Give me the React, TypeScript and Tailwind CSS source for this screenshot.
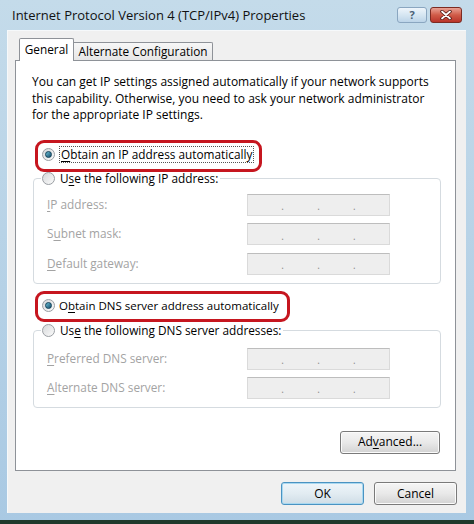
import React from 'react';

const labelRows = [
  { pre: '', key: 'I', post: 'P address:' },
  { pre: 'S', key: 'u', post: 'bnet mask:' },
  { pre: '', key: 'D', post: 'efault gateway:' },
];

const dnsRows = [
  { pre: '', key: 'P', post: 'referred DNS server:' },
  { pre: '', key: 'A', post: 'lternate DNS server:' },
];

function Radio({ checked }: { checked?: boolean }) {
  return (
    <span className="flex h-[13px] w-[13px] shrink-0 items-center justify-center rounded-full border border-[#9a9ea3] bg-gradient-to-br from-[#d6d8da] to-[#fbfbfb]">
      {checked && (
        <span className="h-[7px] w-[7px] rounded-full border border-[#0f3f57] bg-gradient-to-br from-[#6cc0d6] to-[#164e6c]" />
      )}
    </span>
  );
}

function IpField() {
  return (
    <div className="flex h-[22px] w-[143px] items-center border border-[#dadada] border-t-[#bdbdbd] bg-[#eeeeee] text-[10px] leading-none text-[#8c8c8c]">
      <span className="flex-1" />
      <span className="pt-[3px]">.</span>
      <span className="flex-1" />
      <span className="pt-[3px]">.</span>
      <span className="flex-1" />
      <span className="pt-[3px]">.</span>
      <span className="flex-1" />
    </div>
  );
}

function Key({ pre, k, post }: { pre: string; k: string; post: string }) {
  return (
    <span className="whitespace-nowrap">
      {pre}
      <span className="underline underline-offset-2">{k}</span>
      {post}
    </span>
  );
}

function Button({ children, primary }: { children: React.ReactNode; primary?: boolean }) {
  return (
    <button
      className={`flex h-[23px] w-[83px] items-center justify-center rounded-[3px] border bg-gradient-to-b text-[12px] text-black ${
        primary
          ? 'border-[#4a93c2] from-[#eef5fa] via-[#e2ecf2] to-[#cfdde6] shadow-[inset_0_0_0_1px_#a9d8f0]'
          : 'border-[#7a7a7a] from-[#f5f5f5] via-[#e9e9e9] to-[#d3d3d3] shadow-[inset_0_0_0_1px_#fbfbfb]'
      }`}
    >
      {children}
    </button>
  );
}

export default function App() {
  return (
    <div className="flex h-[524px] w-[474px] flex-col bg-gradient-to-b from-[#c4dbea] to-[#a9c9e3] font-['Open_Sans',sans-serif] text-black">
      {/* title bar */}
      <div className="flex h-[30px] shrink-0 items-center pl-[12px] pr-[12px]">
        <span className="flex-1 text-[13px] leading-none text-[#111]">
          Internet Protocol Version 4 (TCP/IPv4) Properties
        </span>
        <div className="flex items-center gap-[3px] pb-[1px]">
          <span className="flex h-[16px] w-[30px] items-center justify-center rounded-[3px] border border-[#8aa6c0] bg-gradient-to-b from-[#eef5fb] via-[#d6e6f2] to-[#bcd4e8] text-[11px] font-bold leading-none text-[#4a6175]">
            ?
          </span>
          <span className="flex h-[16px] w-[32px] items-center justify-center rounded-[3px] border border-[#7c2b22] bg-gradient-to-b from-[#e8a195] via-[#d05b48] to-[#b9332a]">
            <svg width="12" height="10" viewBox="0 0 12 10">
              <path d="M2 1.5L10 8.5M10 1.5L2 8.5" stroke="#4a1410" strokeWidth="3.4" strokeLinecap="round" />
              <path d="M2 1.5L10 8.5M10 1.5L2 8.5" stroke="#ffffff" strokeWidth="1.8" strokeLinecap="round" />
            </svg>
          </span>
        </div>
      </div>

      {/* client */}
      <div className="ml-[7px] flex h-[483px] w-[459px] flex-col border-t border-l border-[#f6f9fb] bg-[#f0f0f0] pt-[7px] text-[11.8px]">
        {/* tabs */}
        <div className="ml-[11px] flex items-end">
          <div className="relative z-10 -mb-px flex h-[23px] w-[55px] items-center justify-center rounded-t-[2px] border border-b-0 border-[#8e9298] bg-white">
            General
          </div>
          <div className="flex h-[18px] w-[139px] items-center justify-center rounded-tr-[2px] border border-b-0 border-l-0 border-[#8e9298] bg-gradient-to-b from-[#f7f7f7] to-[#e6e6e6]">
            Alternate Configuration
          </div>
        </div>

        {/* panel */}
        <div className="ml-[7px] flex h-[411px] w-[441px] flex-col border border-[#8e9298] bg-white pt-[13px] pl-[16px] pr-[15px]">
          <p className="text-[12px] leading-[16.5px]">
            You can get IP settings assigned automatically if your network supports this capability. Otherwise, you need to ask your network administrator for the appropriate IP settings.
          </p>

          <div className="mt-[16px] ml-[3px] flex h-[32px] w-[227px] items-center rounded-[9px] border-[3px] border-[#c6161f] pl-[4px] pb-[2px]">
            <Radio checked />
            <span className="ml-[4px] border border-dotted border-[#555] px-[1px] leading-[15px]">
              <Key pre="" k="O" post="btain an IP address automatically" />
            </span>
          </div>

          <fieldset className="ml-[1px] w-[408px] rounded-[4px] border border-[#d5dbe0] pr-[8px] pb-[8px] pl-[13px] pt-[9px]">
            <legend className="-ml-[6px] flex h-[13px] items-center pr-[2px] pl-[1px]">
              <Radio />
              <span className="ml-[5px] leading-[13px]">
                <Key pre="U" k="s" post="e the following IP address:" />
              </span>
            </legend>
            <div className="grid grid-cols-[200px_143px] gap-y-[7.5px]">
              {labelRows.map((r) => (
                <React.Fragment key={r.post}>
                  <span className="self-center text-[#a3a3a3]">
                    <Key pre={r.pre} k={r.key} post={r.post} />
                  </span>
                  <IpField />
                </React.Fragment>
              ))}
            </div>
          </fieldset>

          <div className="mt-[7px] ml-[3px] flex h-[31px] w-[255px] items-center rounded-[9px] border-[3px] border-[#c6161f] pl-[4px] pb-[1px]">
            <Radio checked />
            <span className="ml-[4px] text-[11.5px] leading-[15px]">
              <Key pre="O" k="b" post="tain DNS server address automatically" />
            </span>
          </div>

          <fieldset className="mt-[2px] ml-[1px] w-[408px] rounded-[4px] border border-[#d5dbe0] pr-[8px] pb-[8px] pl-[13px] pt-[11px]">
            <legend className="-ml-[6px] flex h-[13px] items-center pr-[2px] pl-[1px]">
              <Radio />
              <span className="ml-[5px] leading-[13px]">
                <Key pre="Us" k="e" post=" the following DNS server addresses:" />
              </span>
            </legend>
            <div className="grid grid-cols-[200px_143px] gap-y-[7px]">
              {dnsRows.map((r) => (
                <React.Fragment key={r.post}>
                  <span className="self-center text-[#a3a3a3]">
                    <Key pre={r.pre} k={r.key} post={r.post} />
                  </span>
                  <IpField />
                </React.Fragment>
              ))}
            </div>
          </fieldset>

          <div className="mt-[23px] flex justify-end">
            <button className="flex h-[23px] w-[100px] items-center justify-center rounded-[3px] border border-[#7a7a7a] bg-gradient-to-b from-[#f5f5f5] via-[#e9e9e9] to-[#d3d3d3] text-[12px] shadow-[inset_0_0_0_1px_#fbfbfb]">
              <Key pre="Ad" k="v" post="anced..." />
            </button>
          </div>
        </div>

        {/* dialog buttons */}
        <div className="mt-[11px] flex justify-end gap-[10px] pr-[9px]">
          <Button primary>OK</Button>
          <Button>Cancel</Button>
        </div>
      </div>

      <div className="h-[7px] shrink-0" />
      <div className="h-[4px] shrink-0 bg-[#1f3a2c]" />
    </div>
  );
}
